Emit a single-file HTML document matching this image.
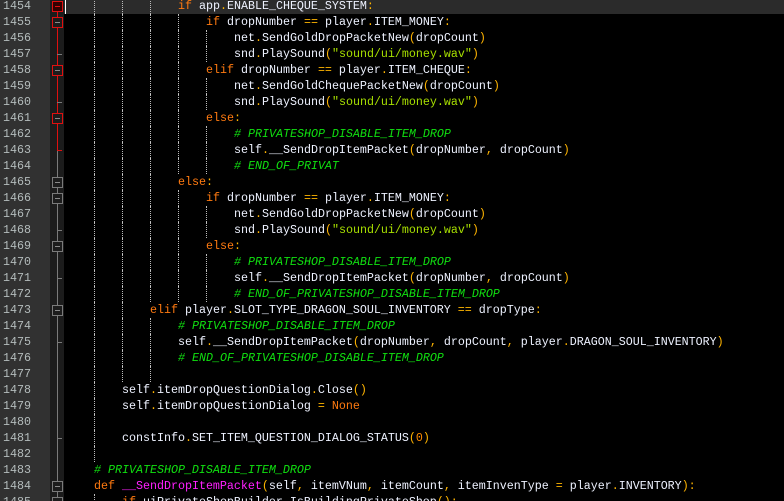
<!DOCTYPE html>
<html><head><meta charset="utf-8"><style>
html,body{margin:0;width:784px;height:501px;overflow:hidden}
body{background:#000;font-family:"Liberation Mono",monospace;font-size:11.67px;position:relative}
#g{position:absolute;left:0;top:0;width:50px;height:501px;background:#313131}
#m{position:absolute;left:50px;top:0;width:14px;height:501px;background:#1c1c1c}
.ln{position:absolute;left:0;width:50px;height:16px;line-height:16px;color:#b4bcbc;padding-left:3px;box-sizing:border-box}
.l{position:absolute;left:66px;height:16px;line-height:16px;white-space:pre;color:#eef2ff}
.i{display:inline-block;width:28px;height:16px;vertical-align:top}
.d{border-left:1px dotted #bbb;box-sizing:border-box}
.k{color:#ff7a10}.o{color:#ffb400}.s{color:#a8e000}.c{color:#10e010;font-style:italic}.f{color:#ff20ff}.n{color:#ff8c00}
.v{position:absolute;left:57px;width:1px;background:#7a7a7a}
.b{position:absolute;left:52px;width:9px;height:9px;border:1px solid #7a7a7a;background:#1c1c1c}
.b::after{content:"";position:absolute;left:2px;top:4px;width:5px;height:1px;background:#8a8a8a}
.b.r{border-color:#e01010}.b.rr::after{background:#e01010}
.t{position:absolute;left:57px;width:5px;height:1px;background:#7a7a7a}
</style></head><body>
<div id="g"></div><div id="m"></div>
<div style="position:absolute;left:64px;top:-2px;width:720px;height:16px;background:#2b2b2b"></div>
<div style="position:absolute;left:65px;top:0;width:1px;height:14px;background:#fff"></div>

<div class="ln" style="top:-2px">1454</div><div class="ln" style="top:14px">1455</div><div class="ln" style="top:30px">1456</div><div class="ln" style="top:46px">1457</div><div class="ln" style="top:62px">1458</div><div class="ln" style="top:78px">1459</div><div class="ln" style="top:94px">1460</div><div class="ln" style="top:110px">1461</div><div class="ln" style="top:126px">1462</div><div class="ln" style="top:142px">1463</div><div class="ln" style="top:158px">1464</div><div class="ln" style="top:174px">1465</div><div class="ln" style="top:190px">1466</div><div class="ln" style="top:206px">1467</div><div class="ln" style="top:222px">1468</div><div class="ln" style="top:238px">1469</div><div class="ln" style="top:254px">1470</div><div class="ln" style="top:270px">1471</div><div class="ln" style="top:286px">1472</div><div class="ln" style="top:302px">1473</div><div class="ln" style="top:318px">1474</div><div class="ln" style="top:334px">1475</div><div class="ln" style="top:350px">1476</div><div class="ln" style="top:366px">1477</div><div class="ln" style="top:382px">1478</div><div class="ln" style="top:398px">1479</div><div class="ln" style="top:414px">1480</div><div class="ln" style="top:430px">1481</div><div class="ln" style="top:446px">1482</div><div class="ln" style="top:462px">1483</div><div class="ln" style="top:478px">1484</div><div class="ln" style="top:494px">1485</div>

<div class="v" style="top:6px;height:145px;background:#e01010"></div>
<div class="t" style="top:150px;background:#e01010"></div>
<div class="v" style="top:151px;height:350px"></div>
<div class="t" style="top:54px"></div><div class="t" style="top:102px"></div>
<div class="t" style="top:230px"></div><div class="t" style="top:278px"></div><div class="t" style="top:342px"></div><div class="t" style="top:438px"></div>
<div class="b r rr" style="top:1px;background:#300"></div>
<div class="b r" style="top:17px"></div><div class="b r" style="top:65px"></div><div class="b r" style="top:113px"></div>
<div class="b" style="top:177px"></div><div class="b" style="top:193px"></div><div class="b" style="top:241px"></div><div class="b" style="top:305px"></div><div class="b" style="top:481px"></div><div class="b" style="top:497px"></div>

<div class="l" style="top:-2px"><span class="i"></span><span class="i d"></span><span class="i d"></span><span class="i d"></span><span class="k">if</span> app<span class="o">.</span>ENABLE_CHEQUE_SYSTEM<span class="o">:</span></div>
<div class="l" style="top:14px"><span class="i"></span><span class="i d"></span><span class="i d"></span><span class="i d"></span><span class="i d"></span><span class="k">if</span> dropNumber <span class="o">==</span> player<span class="o">.</span>ITEM_MONEY<span class="o">:</span></div>
<div class="l" style="top:30px"><span class="i"></span><span class="i d"></span><span class="i d"></span><span class="i d"></span><span class="i d"></span><span class="i d"></span>net<span class="o">.</span>SendGoldDropPacketNew<span class="o">(</span>dropCount<span class="o">)</span></div>
<div class="l" style="top:46px"><span class="i"></span><span class="i d"></span><span class="i d"></span><span class="i d"></span><span class="i d"></span><span class="i d"></span>snd<span class="o">.</span>PlaySound<span class="o">(</span><span class="s">"sound/ui/money.wav"</span><span class="o">)</span></div>
<div class="l" style="top:62px"><span class="i"></span><span class="i d"></span><span class="i d"></span><span class="i d"></span><span class="i d"></span><span class="k">elif</span> dropNumber <span class="o">==</span> player<span class="o">.</span>ITEM_CHEQUE<span class="o">:</span></div>
<div class="l" style="top:78px"><span class="i"></span><span class="i d"></span><span class="i d"></span><span class="i d"></span><span class="i d"></span><span class="i d"></span>net<span class="o">.</span>SendGoldChequePacketNew<span class="o">(</span>dropCount<span class="o">)</span></div>
<div class="l" style="top:94px"><span class="i"></span><span class="i d"></span><span class="i d"></span><span class="i d"></span><span class="i d"></span><span class="i d"></span>snd<span class="o">.</span>PlaySound<span class="o">(</span><span class="s">"sound/ui/money.wav"</span><span class="o">)</span></div>
<div class="l" style="top:110px"><span class="i"></span><span class="i d"></span><span class="i d"></span><span class="i d"></span><span class="i d"></span><span class="k">else</span><span class="o">:</span></div>
<div class="l" style="top:126px"><span class="i"></span><span class="i d"></span><span class="i d"></span><span class="i d"></span><span class="i d"></span><span class="i d"></span><span class="c"># PRIVATESHOP_DISABLE_ITEM_DROP</span></div>
<div class="l" style="top:142px"><span class="i"></span><span class="i d"></span><span class="i d"></span><span class="i d"></span><span class="i d"></span><span class="i d"></span>self<span class="o">.</span>__SendDropItemPacket<span class="o">(</span>dropNumber<span class="o">,</span> dropCount<span class="o">)</span></div>
<div class="l" style="top:158px"><span class="i"></span><span class="i d"></span><span class="i d"></span><span class="i d"></span><span class="i d"></span><span class="i d"></span><span class="c"># END_OF_PRIVAT</span></div>
<div class="l" style="top:174px"><span class="i"></span><span class="i d"></span><span class="i d"></span><span class="i d"></span><span class="k">else</span><span class="o">:</span></div>
<div class="l" style="top:190px"><span class="i"></span><span class="i d"></span><span class="i d"></span><span class="i d"></span><span class="i d"></span><span class="k">if</span> dropNumber <span class="o">==</span> player<span class="o">.</span>ITEM_MONEY<span class="o">:</span></div>
<div class="l" style="top:206px"><span class="i"></span><span class="i d"></span><span class="i d"></span><span class="i d"></span><span class="i d"></span><span class="i d"></span>net<span class="o">.</span>SendGoldDropPacketNew<span class="o">(</span>dropCount<span class="o">)</span></div>
<div class="l" style="top:222px"><span class="i"></span><span class="i d"></span><span class="i d"></span><span class="i d"></span><span class="i d"></span><span class="i d"></span>snd<span class="o">.</span>PlaySound<span class="o">(</span><span class="s">"sound/ui/money.wav"</span><span class="o">)</span></div>
<div class="l" style="top:238px"><span class="i"></span><span class="i d"></span><span class="i d"></span><span class="i d"></span><span class="i d"></span><span class="k">else</span><span class="o">:</span></div>
<div class="l" style="top:254px"><span class="i"></span><span class="i d"></span><span class="i d"></span><span class="i d"></span><span class="i d"></span><span class="i d"></span><span class="c"># PRIVATESHOP_DISABLE_ITEM_DROP</span></div>
<div class="l" style="top:270px"><span class="i"></span><span class="i d"></span><span class="i d"></span><span class="i d"></span><span class="i d"></span><span class="i d"></span>self<span class="o">.</span>__SendDropItemPacket<span class="o">(</span>dropNumber<span class="o">,</span> dropCount<span class="o">)</span></div>
<div class="l" style="top:286px"><span class="i"></span><span class="i d"></span><span class="i d"></span><span class="i d"></span><span class="i d"></span><span class="i d"></span><span class="c"># END_OF_PRIVATESHOP_DISABLE_ITEM_DROP</span></div>
<div class="l" style="top:302px"><span class="i"></span><span class="i d"></span><span class="i d"></span><span class="k">elif</span> player<span class="o">.</span>SLOT_TYPE_DRAGON_SOUL_INVENTORY <span class="o">==</span> dropType<span class="o">:</span></div>
<div class="l" style="top:318px"><span class="i"></span><span class="i d"></span><span class="i d"></span><span class="i d"></span><span class="c"># PRIVATESHOP_DISABLE_ITEM_DROP</span></div>
<div class="l" style="top:334px"><span class="i"></span><span class="i d"></span><span class="i d"></span><span class="i d"></span>self<span class="o">.</span>__SendDropItemPacket<span class="o">(</span>dropNumber<span class="o">,</span> dropCount<span class="o">,</span> player<span class="o">.</span>DRAGON_SOUL_INVENTORY<span class="o">)</span></div>
<div class="l" style="top:350px"><span class="i"></span><span class="i d"></span><span class="i d"></span><span class="i d"></span><span class="c"># END_OF_PRIVATESHOP_DISABLE_ITEM_DROP</span></div>
<div class="l" style="top:366px"><span class="i"></span><span class="i d"></span><span class="i d"></span><span class="i d"></span></div>
<div class="l" style="top:382px"><span class="i"></span><span class="i d"></span>self<span class="o">.</span>itemDropQuestionDialog<span class="o">.</span>Close<span class="o">()</span></div>
<div class="l" style="top:398px"><span class="i"></span><span class="i d"></span>self<span class="o">.</span>itemDropQuestionDialog <span class="o">=</span> <span class="k">None</span></div>
<div class="l" style="top:414px"><span class="i"></span><span class="i d"></span></div>
<div class="l" style="top:430px"><span class="i"></span><span class="i d"></span>constInfo<span class="o">.</span>SET_ITEM_QUESTION_DIALOG_STATUS<span class="o">(</span><span class="n">0</span><span class="o">)</span></div>
<div class="l" style="top:446px"><span class="i"></span><span class="i d"></span></div>
<div class="l" style="top:462px"><span class="i"></span><span class="c"># PRIVATESHOP_DISABLE_ITEM_DROP</span></div>
<div class="l" style="top:478px"><span class="i"></span><span class="k">def</span> <span class="f">__SendDropItemPacket</span><span class="o">(</span>self<span class="o">,</span> itemVNum<span class="o">,</span> itemCount<span class="o">,</span> itemInvenType <span class="o">=</span> player<span class="o">.</span>INVENTORY<span class="o">):</span></div>
<div class="l" style="top:494px"><span class="i"></span><span class="i d"></span><span class="k">if</span> uiPrivateShopBuilder<span class="o">.</span>IsBuildingPrivateShop<span class="o">():</span></div>
</body></html>
